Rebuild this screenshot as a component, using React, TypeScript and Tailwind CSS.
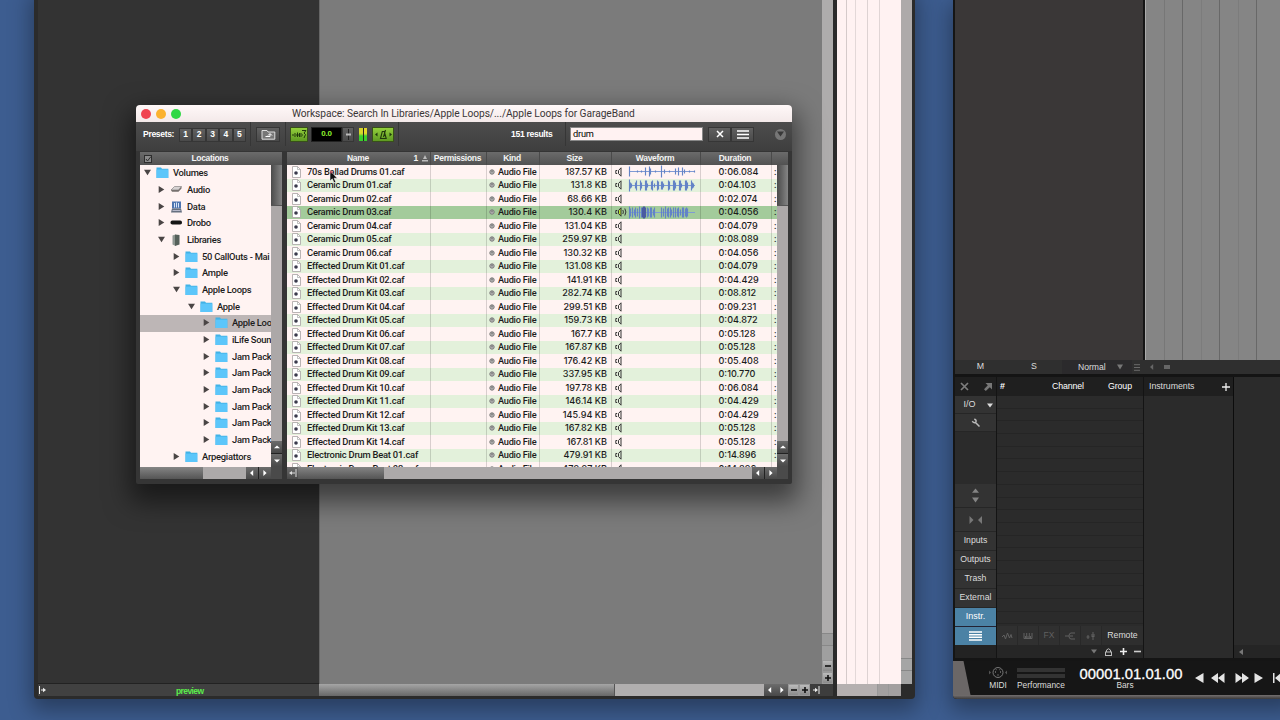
import React from "react";

const ui = "font-['Roboto','Liberation_Sans',sans-serif]";
const num = "font-['Inter','Liberation_Sans',sans-serif]";

const rows: [string, string, string][] = [
  ["70s Ballad Drums 01.caf", "187.57 KB", "0:06.084"],
  ["Ceramic Drum 01.caf", "131.8 KB", "0:04.103"],
  ["Ceramic Drum 02.caf", "68.66 KB", "0:02.074"],
  ["Ceramic Drum 03.caf", "130.4 KB", "0:04.056"],
  ["Ceramic Drum 04.caf", "131.04 KB", "0:04.079"],
  ["Ceramic Drum 05.caf", "259.97 KB", "0:08.089"],
  ["Ceramic Drum 06.caf", "130.32 KB", "0:04.056"],
  ["Effected Drum Kit 01.caf", "131.08 KB", "0:04.079"],
  ["Effected Drum Kit 02.caf", "141.91 KB", "0:04.429"],
  ["Effected Drum Kit 03.caf", "282.74 KB", "0:08.812"],
  ["Effected Drum Kit 04.caf", "299.51 KB", "0:09.231"],
  ["Effected Drum Kit 05.caf", "159.73 KB", "0:04.872"],
  ["Effected Drum Kit 06.caf", "167.7 KB", "0:05.128"],
  ["Effected Drum Kit 07.caf", "167.87 KB", "0:05.128"],
  ["Effected Drum Kit 08.caf", "176.42 KB", "0:05.408"],
  ["Effected Drum Kit 09.caf", "337.95 KB", "0:10.770"],
  ["Effected Drum Kit 10.caf", "197.78 KB", "0:06.084"],
  ["Effected Drum Kit 11.caf", "146.14 KB", "0:04.429"],
  ["Effected Drum Kit 12.caf", "145.94 KB", "0:04.429"],
  ["Effected Drum Kit 13.caf", "167.82 KB", "0:05.128"],
  ["Effected Drum Kit 14.caf", "167.81 KB", "0:05.128"],
  ["Electronic Drum Beat 01.caf", "479.91 KB", "0:14.896"],
  ["Electronic Drum Beat 02.caf", "479.97 KB", "0:14.896"],
];

type Kind = "folder" | "drive" | "data" | "drobo" | "lib";
const tree: { d: number; name: string; open?: boolean; kind: Kind; sel?: boolean }[] = [
  { d: 0, name: "Volumes", open: true, kind: "folder" },
  { d: 1, name: "Audio", kind: "drive" },
  { d: 1, name: "Data", kind: "data" },
  { d: 1, name: "Drobo", kind: "drobo" },
  { d: 1, name: "Libraries", open: true, kind: "lib" },
  { d: 2, name: "50 CallOuts - Mai", kind: "folder" },
  { d: 2, name: "Ample", kind: "folder" },
  { d: 2, name: "Apple Loops", open: true, kind: "folder" },
  { d: 3, name: "Apple", open: true, kind: "folder" },
  { d: 4, name: "Apple Loo", kind: "folder", sel: true },
  { d: 4, name: "iLife Soun", kind: "folder" },
  { d: 4, name: "Jam Pack", kind: "folder" },
  { d: 4, name: "Jam Pack", kind: "folder" },
  { d: 4, name: "Jam Pack", kind: "folder" },
  { d: 4, name: "Jam Pack", kind: "folder" },
  { d: 4, name: "Jam Pack", kind: "folder" },
  { d: 4, name: "Jam Pack", kind: "folder" },
  { d: 2, name: "Arpegiattors", kind: "folder" },
  { d: 2, name: "", kind: "folder" },
];

const indents = ["pl-[4px]", "pl-[18px]", "pl-[33px]", "pl-[48px]", "pl-[63px]"];

function Tri({ dir, className = "" }: { dir: "l" | "r" | "u" | "d"; className?: string }) {
  const p = { l: "M8 0V10L0 5Z", r: "M1 0V10L9 5Z", u: "M0 8H10L5 1Z", d: "M0 1H10L5 9Z" }[dir];
  return (
    <svg viewBox="0 0 10 10" preserveAspectRatio="none" className={"shrink-0 " + className} fill="currentColor">
      <path d={p} />
    </svg>
  );
}

function TreeIcon({ kind }: { kind: Kind }) {
  return (
    <svg width="13" height="12" viewBox="0 0 13 12" className="shrink-0">
      {kind === "folder" && (
        <>
          <path d="M0.5 0.5H5L6 1.8H12.3V11H0.5Z" fill="#41b2e6" />
          <path d="M0.5 2.6H12.3V11H0.5Z" fill="#5cc6fa" />
        </>
      )}
      {kind === "drive" && (
        <>
          <path d="M1 6L4.500 2.500H11.500L8.500 6Z" fill="#d6d2d2" stroke="#777" strokeWidth=".6" />
          <path d="M1 6H8.500L11.500 2.500V4.500L8.500 7.800H2Z" fill="#77716f" />
        </>
      )}
      {kind === "data" && (
        <>
          <rect x="2" y="0.5" width="9" height="7" fill="#4d74b0" />
          <path d="M4.5 2V6.500M6.5 1.5V6.500M8.5 2V6.500" stroke="#e8f0ff" strokeWidth=".9" />
          <path d="M2 7.5H11L12 11.5H1Z" fill="#667080" />
          <path d="M2.500 9.5H10.500" stroke="#ccd" strokeWidth=".8" />
        </>
      )}
      {kind === "drobo" && <rect x="0.5" y="3.6" width="11.5" height="4" rx="1.8" fill="#151515" />}
      {kind === "lib" && (
        <>
          <path d="M2.500 1.500L5.500 0.5V12L2.500 10.5Z" fill="#8d9691" />
          <path d="M5 0.5L9.500 1V10.500L5 12Z" fill="#55605a" />
        </>
      )}
    </svg>
  );
}

function Speaker({ active }: { active?: boolean }) {
  return (
    <svg width="13" height="10" viewBox="0 0 13 10" className="shrink-0" fill="none" stroke="#333" strokeWidth="1">
      <path d="M2.2 3.5H.8V6.5H2.2" />
      <path d="M3.500 3.500L6 .8V9.200L3.500 6.500Z" fill={active ? "#b8e62c" : "none"} />
      {active && <path d="M7.800 3Q9 5 7.800 7M9.800 1.500Q12 5 9.800 8.500" />}
    </svg>
  );
}

const waves: Record<number, [number, number][]> = {
  0: [[1, 5], [9, 1], [13, 1], [17, 4], [21, 5], [22, 3], [27, 1], [33, 6], [36, 2], [41, 1], [47, 3], [50, 4], [54, 4], [56, 2], [61, 1], [66, 1]],
  1: [[1, 6], [2, 3], [3, 2], [7, 3], [8, 5], [12, 5], [13, 3], [17, 5], [18, 5], [19, 2], [23, 4], [24, 5], [26, 2], [29, 5], [30, 4], [33, 4], [34, 4], [35, 2], [40, 5], [41, 4], [45, 5], [46, 5], [47, 3], [51, 5], [52, 5], [53, 2], [57, 5], [58, 5], [59, 3], [63, 5], [64, 3], [65, 2]],
  3: [[1, 6], [2, 4], [4, 5], [6, 3], [7, 5], [9, 4], [11, 6], [13, 5], [14, 5], [15, 6], [16, 6], [17, 5], [19, 5], [20, 4], [22, 5], [23, 5], [25, 3], [26, 5], [33, 5], [35, 4], [37, 6], [39, 4], [40, 5], [42, 5], [43, 3], [45, 5], [47, 5], [49, 4], [50, 5], [52, 3], [54, 5], [55, 5], [57, 4], [58, 5], [59, 4]],
};

function Wave({ i }: { i: number }) {
  return (
    <svg width="68" height="13" viewBox="0 0 68 13" className="shrink-0">
      <path d="M1 6.5H67" stroke="#7f9bd4" strokeWidth="1" />
      {waves[i].map(([x, h], k) => (
        <path key={k} d={`M${x + 0.5} ${6.5 - h}V${6.5 + h}`} stroke={i === 3 && x > 13 && x < 18 ? "#4a5ca0" : "#6384c6"} strokeWidth="1.15" />
      ))}
    </svg>
  );
}

const sbBtn = "flex shrink-0 items-center justify-center border-[#222] bg-linear-to-b from-[#6c6c6c] to-[#484848] text-white";

function VScroll() {
  return (
    <div className="flex w-[11px] shrink-0 flex-col">
      <div className="h-10 bg-linear-to-r from-[#4b4b4b] to-[#858585]" />
      <div className="flex-1 border-t border-[#555] bg-[#aca8a8]" />
      <div className={sbBtn + " h-[13px] border-b"}><Tri dir="u" className="h-1 w-1.5" /></div>
      <div className={sbBtn + " h-[13px]"}><Tri dir="d" className="h-1 w-1.5" /></div>
    </div>
  );
}

function HButtons() {
  return (
    <>
      <div className={sbBtn + " w-[13px] border-r"}><Tri dir="l" className="h-1.5 w-1" /></div>
      <div className={sbBtn + " w-3"}><Tri dir="r" className="h-1.5 w-1" /></div>
      <div className="w-[11px] shrink-0 bg-[#4a4a4a]" />
    </>
  );
}

const tbBtn = "flex items-center justify-center border border-[#363636] bg-linear-to-b from-[#606060] to-[#4a4a4a] text-white";

function Toolbar() {
  return (
    <div className="flex h-[29px] shrink-0 items-center bg-linear-to-b from-[#4d4d4d] to-[#3e3e3e] pb-[5px] pl-[7px] font-['Liberation_Sans',sans-serif] text-[9px] font-bold text-white">
      <span className="w-[36px] pt-px text-[8.6px] tracking-[-0.35px]">Presets:</span>
      <div className="flex h-[15px] w-[67px] pt-px text-[8.5px]">
        {[1, 2, 3, 4, 5].map((n) => (
          <div key={n} className={tbBtn + " flex-1"}>{n}</div>
        ))}
      </div>
      <div className="ml-1 mr-[5px] h-6 w-px bg-[#363636]" />
      <div className={tbBtn + " h-[15px] w-[24px]"}>
        <svg width="15" height="11" viewBox="0 0 15 11" fill="#777" stroke="#ddd" strokeWidth="1" className="shrink-0">
          <path d="M1 10.2V1.5H6L7 3H13.8V10.2Z" />
          <path d="M4.500 7.500H9V5M7 6.500L9 4.500L11 6.500" fill="none" stroke="#fff" />
        </svg>
      </div>
      <div className="ml-[5px] mr-1 h-6 w-px bg-[#363636]" />
      <div className="flex h-[15px] w-[18px] items-center justify-center border border-[#38501a] bg-linear-to-b from-[#93cf3c] to-[#5f9b22]">
        <svg width="15" height="11" viewBox="0 0 15 11" fill="none" stroke="#20380c" strokeWidth="1" className="shrink-0">
          <path d="M0 6H3M2.500 4L4.500 6L2.500 8M5.500 8V3.500M7.500 8V4M6 6H9M8.500 4L10.500 6L8.500 8M10 1.500H14L12 4L13.500 5.500L12 9" />
        </svg>
      </div>
      <div className="ml-[3px] flex h-[15px] w-[31px] items-center justify-center border border-[#222] bg-black text-[8px] tracking-[-0.2px] text-[#8ff02e]">0.0</div>
      <div className={tbBtn + " h-[15px] w-[12px]"}>
        <svg width="5" height="11" viewBox="0 0 5 11" fill="none" stroke="#bbb" className="shrink-0"><path d="M2.5 0V11" stroke="#222" /><path d="M0 5.5H5" strokeWidth="2" /></svg>
      </div>
      <div className="ml-[5px] flex h-[13px] w-2 gap-px bg-[#222]">
        <div className="flex-1 bg-linear-to-b from-[#d7d52b] from-40% to-[#39cf2c] to-60%" />
        <div className="flex-1 bg-linear-to-b from-[#e5d92b] from-40% to-[#39cf2c] to-60%" />
      </div>
      <div className="ml-[5px] flex h-[15px] w-[22px] items-center justify-center border border-[#38501a] bg-linear-to-b from-[#93cf3c] to-[#5f9b22]">
        <svg width="19" height="11" viewBox="0 0 19 11" fill="#20380c" stroke="#20380c" className="shrink-0">
          <path d="M3.5 3.5V7.5L1 5.5ZM15.5 3.5V7.5L18 5.5Z" stroke="none" />
          <path d="M6.5 9.5L8.3 2.5H10.3L12.2 9.5ZM9.5 8L11.5 1" fill="none" strokeWidth="1.1" />
        </svg>
      </div>
      <div className="ml-1 h-6 w-px bg-[#363636]" />
      <span className="ml-[112px] w-[50px] whitespace-nowrap pt-px text-[8.6px] tracking-[-0.32px]">151 results</span>
      <div className="ml-1 mr-[4px] h-6 w-px bg-[#363636]" />
      <div className={"flex h-3.5 w-[133px] items-center border border-[#888] bg-[#fff2f2] pl-[2px] text-[9.2px] font-normal tracking-[-0.2px] text-black " + ui}>drum</div>
      <div className={tbBtn + " ml-[5px] h-[15px] w-[23px]"}>
        <svg width="8" height="8" viewBox="0 0 8 8" stroke="#fff" strokeWidth="1.5"><path d="M1 1L7 7M7 1L1 7" /></svg>
      </div>
      <div className={tbBtn + " h-[15px] w-[23px]"}>
        <svg width="12" height="9" viewBox="0 0 12 9" stroke="#fff" strokeWidth="1.4"><path d="M0 1H12M0 4.5H12M0 8H12" /></svg>
      </div>
      <div className="ml-[21px] flex h-[11px] w-[11px] items-center justify-center rounded-full bg-[#767676] text-[#383838]"><Tri dir="d" className="h-1.5 w-[7px]" /></div>
    </div>
  );
}

function FileTable() {
  const hd = "flex shrink-0 items-center justify-center border-r border-[#4a4a4a]";
  const ln = "h-full shrink-0 border-r border-black/15 flex items-center";
  return (
    <div className="flex w-[501px] shrink-0 flex-col">
      <div className="flex h-[13px] shrink-0 bg-linear-to-b from-[#6b6b6b] to-[#525252] font-['Liberation_Sans',sans-serif] text-[8.5px] font-bold tracking-[-0.3px] text-[#f4f4f4]">
        <div className={hd + " w-[144px] pl-[60px]"}>
          <span className="flex-1">Name</span>
          <span className="mr-1">1</span>
          <svg width="6" height="7" viewBox="0 0 6 7" className="mr-0.5" fill="#bbb"><path d="M3 0L5 4H1ZM0 5H6V6.5H0Z" /></svg>
        </div>
        <div className={hd + " w-[56px] pr-0.5"}>Permissions</div>
        <div className={hd + " w-[53px] pr-0.5"}>Kind</div>
        <div className={hd + " w-[72px] pr-0.5"}>Size</div>
        <div className={hd + " w-[89px] pr-0.5"}>Waveform</div>
        <div className={hd + " w-[71px] pr-0.5"}>Duration</div>
      </div>
      <div className="flex h-[302px] shrink-0">
        <div className={"w-[490px] overflow-hidden bg-[#fff3f2] text-[9.4px] font-medium text-[#1c1c1c] " + ui}>
          {rows.map((r, i) => (
            <div key={i} className={"flex h-[13.5px] items-center whitespace-nowrap " + (i === 3 ? "bg-[#a3cb9b]" : i % 2 ? "bg-[#e3f1db]" : "bg-[#fff3f2]")}>
              <div className={ln + " w-[144px] pl-[5px]"}>
                <svg width="9" height="12" viewBox="0 0 9 12" className="mr-[6px] shrink-0">
                  <path d="M.5 .5H5.5L8.5 3.5V11.5H.5Z" fill="#fff" stroke="#a8a2a2" strokeWidth=".8" />
                  <path d="M5.5 .5V3.5H8.5" fill="none" stroke="#999" strokeWidth=".6" />
                  <circle cx="4" cy="7" r="1.8" fill="#3a3a4c" />
                </svg>
                <span className="tracking-[-0.23px]">{r[0]}</span>
              </div>
              <div className={ln + " w-[56px]"} />
              <div className={ln + " w-[53px] pl-[2px]"}>
                <svg width="6" height="6" viewBox="0 0 6 6" className="mr-[3px] shrink-0"><circle cx="3" cy="3" r="2.2" fill="#bbb" stroke="#777" /><path d="M3 1.6V3.4" stroke="#444" strokeWidth=".8" /></svg>
                <span className="w-[39px] shrink-0 text-[9.2px] tracking-[-0.25px]">Audio File</span>
              </div>
              <div className={ln + " w-[72px] justify-end pr-[4px] text-[9.1px] " + num}>{r[1]}</div>
              <div className={ln + " w-[89px] pl-[3px]"}>
                <Speaker active={i === 3} />
                {waves[i] && <Wave i={i} />}
              </div>
              <div className={ln + " w-[71px] pl-[17.5px] text-[9.1px] " + num}>{r[2]}</div>
              <span className="pl-[2px]">:</span>
            </div>
          ))}
        </div>
        <VScroll />
      </div>
      <div className="flex h-3 shrink-0">
        <div className={sbBtn + " w-[11px]"}>
          <svg width="8" height="8" viewBox="0 0 8 8" stroke="#ddd" fill="#ddd"><path d="M7 0V8M2 4H6" /><path d="M0 4L3 2V6Z" stroke="none" /></svg>
        </div>
        <div className="w-[86px] bg-linear-to-b from-[#858585] to-[#555]" />
        <div className="flex-1 bg-[#aca9a9]" />
        <HButtons />
      </div>
    </div>
  );
}

function Locations() {
  return (
    <div className="flex w-[142px] shrink-0 flex-col">
      <div className="flex h-[13px] shrink-0 items-center bg-linear-to-b from-[#6b6b6b] to-[#525252] pl-1 font-['Liberation_Sans',sans-serif] text-[8.5px] font-bold tracking-[-0.35px] text-[#f4f4f4]">
        <svg width="8" height="8" viewBox="0 0 8 8" fill="none" stroke="#2d2d2d"><rect x=".5" y=".5" width="7" height="7" fill="#8a8a8a" /><path d="M2 4L3.5 6L7 1.5" /></svg>
        <span className="w-[116px] text-center">Locations</span>
      </div>
      <div className="flex h-[302px] shrink-0">
        <div className={"w-[131px] overflow-hidden bg-[#fff3f2] text-[9.4px] font-medium text-[#1c1c1c] " + ui}>
          {tree.map((t, i) => (
            <div key={i} className={"flex h-[16.68px] items-center whitespace-nowrap " + indents[t.d] + (t.sel ? " bg-[#bdb6b6]" : "")}>
              <div className="flex w-3 shrink-0 pb-px text-[#4a4545]">
                <Tri dir={t.open ? "d" : "r"} className="h-[7px] w-[7px]" />
              </div>
              <TreeIcon kind={t.kind} />
              <span className="pl-1 tracking-[-0.27px]">{t.name}</span>
            </div>
          ))}
        </div>
        <VScroll />
      </div>
      <div className="flex h-3 shrink-0">
        <div className="w-[63px] bg-linear-to-b from-[#858585] to-[#555]" />
        <div className="flex-1 bg-[#aca9a9]" />
        <HButtons />
      </div>
    </div>
  );
}

function Workspace() {
  return (
    <div className="absolute left-[136px] top-[105px] flex h-[379px] w-[656px] flex-col overflow-hidden rounded-t-[4px] rounded-b-[2px] bg-[#353535] shadow-[0_12px_26px_6px_rgba(0,0,0,0.5)]">
      <div className="flex h-[17px] shrink-0 items-center bg-linear-to-b from-[#fff8f8] to-[#f3e9e9] pl-[5px] pt-px">
        <div className="flex gap-[5px]">
          <div className="h-2.5 w-2.5 rounded-full bg-[#f04450]" />
          <div className="h-2.5 w-2.5 rounded-full bg-[#fbb22f]" />
          <div className="h-2.5 w-2.5 rounded-full bg-[#2fd845]" />
        </div>
        <span className={"ml-[111px] whitespace-nowrap text-[10.2px] tracking-[-0.055px] text-[#3a3636] " + ui}>
          Workspace: Search In Libraries/Apple Loops/.../Apple Loops for GarageBand
        </span>
      </div>
      <Toolbar />
      <div className="mt-px flex flex-1 gap-[5px] px-1">
        <Locations />
        <FileTable />
      </div>
    </div>
  );
}

function BackWindow() {
  const knob = "flex shrink-0 items-center justify-center bg-linear-to-b from-[#bbb] to-[#8a8a8a] text-[#111] border border-[#999]";
  const minus = <svg width="6" height="6" viewBox="0 0 6 6" stroke="#111" strokeWidth="1.6"><path d="M0 3H6" /></svg>;
  const plus = <svg width="6" height="6" viewBox="0 0 6 6" stroke="#111" strokeWidth="1.6"><path d="M0 3H6M3 0V6" /></svg>;
  return (
    <div className="absolute left-[34px] top-[-10px] flex h-[709px] w-[881px] rounded-b-[4px] bg-[#2b2b2b] pb-[3px] pl-1 pr-[3px] shadow-[0_8px_22px_3px_rgba(0,0,0,0.35)]">
      <div className="flex w-[281px] shrink-0 flex-col">
        <div className="flex-1 bg-[#333]" />
        <div className="flex h-[13px] items-center border-t border-[#222] bg-[#414141]">
          <svg width="9" height="8" viewBox="0 0 9 8" stroke="#eee" fill="#eee"><path d="M1.5 0V8M3 4H6" /><path d="M8 4L5 1.8V6.2Z" stroke="none" /></svg>
          <span className="ml-[129px] pt-0.5 font-['Liberation_Sans',sans-serif] text-[8.5px] font-bold leading-[10px] tracking-[-0.6px] text-[#5cec4c]">preview</span>
        </div>
      </div>
      <div className="flex w-[514px] shrink-0 flex-col">
        <div className="flex flex-1">
          <div className="flex-1 border-l border-[#666] bg-[#7b7b7b]" />
          <div className="flex w-[11px] flex-col bg-[#aeacac]">
            <div className="flex-1" />
            <div className="h-[13px] border-y border-[#888] bg-[#9c9c9c]" />
            <div className="h-[14px] bg-[#9f9f9f]" />
            <div className={knob + " h-3"}>{minus}</div>
            <div className={knob + " h-3"}>{plus}</div>
          </div>
        </div>
        <div className="flex h-3 bg-[#3d3d3d]">
          <div className="w-[296px] border-r border-[#555] bg-linear-to-b from-[#a5a5a5] to-[#686868]" />
          <div className="w-[149px] bg-[#b1afaf]" />
          <div className={sbBtn + " w-3"}><Tri dir="l" className="h-1.5 w-1" /></div>
          <div className={sbBtn + " w-3"}><Tri dir="r" className="h-1.5 w-1" /></div>
          <div className={knob + " w-[11px]"}>{minus}</div>
          <div className={knob + " w-[11px]"}>{plus}</div>
          <div className="flex w-3 items-center justify-center">
            <svg width="8" height="8" viewBox="0 0 8 8" stroke="#eee" fill="#eee"><path d="M7 0V8M1 4H4" /><path d="M6 4L3 1.8V6.2Z" stroke="none" /></svg>
          </div>
        </div>
      </div>
      <div className="ml-1 flex w-[75px] shrink-0 flex-col">
        <div className="flex flex-1">
          <div className="flex w-16 bg-[#fff2f2]">
            <div className="w-[10px] border-r border-[#d5caca]" />
            <div className="w-[9px] border-r border-[#e3d8d8]" />
            <div className="w-3 border-r border-[#ddd2d2]" />
            <div className="w-3 border-r border-[#e0d5d5]" />
          </div>
          <div className="flex w-[11px] flex-col bg-[#aeaaaa]">
            <div className="flex-1" />
            <div className="h-[13px] border-y border-[#888] bg-[#a5a5a5]" />
            <div className="h-[13px] bg-[#a5a5a5]" />
          </div>
        </div>
        <div className="flex h-3 w-16 bg-[#b5b0b0]">
          <div className="w-10" />
          <div className="w-3 border-x border-[#999] bg-[#a3a0a0]" />
          <div className="w-3 bg-[#a3a0a0]" />
        </div>
      </div>
    </div>
  );
}

function Studio() {
  const btn = "flex shrink-0 items-center justify-center border-b border-[#262626] bg-[#333]";
  return (
    <div className="absolute left-[953px] top-0 flex h-[699px] w-[340px] flex-col rounded-bl-[4px] bg-[#151515] font-['Liberation_Sans',sans-serif] text-[9px] text-[#dcdcdc] shadow-[0_8px_22px_3px_rgba(0,0,0,0.35)]">
      <div className="flex h-[360px] shrink-0 pl-0.5">
        <div className="w-[188px] bg-[#3a3737]" />
        <div className="w-0.5 bg-[#151515]" />
        <div className="flex flex-1 border-l border-[#aaa] bg-[#858585]">
          <div className="w-[19px] border-r border-[#777]" />
          <div className="w-[18px] border-r border-[#686868]" />
          <div className="w-[19px] border-r border-[#7c7c7c]" />
          <div className="w-[18px] border-r border-[#686868]" />
          <div className="w-[19px] border-r border-[#7c7c7c]" />
          <div className="w-[18px] border-r border-[#686868]" />
        </div>
      </div>
      <div className="ml-0.5 flex h-[14px] shrink-0 items-center bg-[#2f2f2f] text-[8.8px]">
        <span className="w-[51px] text-center">M</span>
        <span className="w-[56px] text-center">S</span>
        <div className="flex h-full w-[70px] items-center bg-[#2b2a2c] pl-4 pt-px text-[8.6px]">Normal</div>
        <Tri dir="d" className="-ml-[15px] h-1.5 w-1.5 text-[#777]" />
        <svg width="8" height="7" viewBox="0 0 8 7" className="ml-2.5" stroke="#6a6a6a"><path d="M1 .7H7M1 3.5H7M1 6.3H7" /></svg>
        <Tri dir="l" className="ml-[9px] h-1.5 w-1 text-[#666]" />
        <div className="ml-2.5 h-1 w-1.5 bg-[#666]" />
      </div>
      <div className="h-[3px] shrink-0 bg-[#141414]" />
      <div className="flex h-[281px] shrink-0 pl-0.5">
        <div className="flex w-[41px] shrink-0 flex-col bg-[#2b2b2b]">
          <div className="flex h-[19px] shrink-0 items-center bg-[#1f1f1f] pl-[5px]">
            <svg width="9" height="9" viewBox="0 0 9 9" stroke="#7d7d7d" strokeWidth="1.7"><path d="M1 1L8 8M8 1L1 8" /></svg>
            <svg width="8" height="8" viewBox="0 0 8 8" className="ml-[15px]" fill="#777"><path d="M1.5 0H8V6.5L5.8 4.3L1.8 8L0 6.2L3.8 2.3Z" /></svg>
          </div>
          <div className={btn + " h-[18px] pt-px pr-1"}><span className="w-[19px] text-center">I/O</span><Tri dir="d" className="ml-2 -mr-1.5 h-[5px] w-1.5" /></div>
          <div className={btn + " h-[18px]"}>
            <svg width="9" height="9" viewBox="0 0 9 9" fill="none" stroke="#bbb" strokeWidth="1.5"><path d="M4.5 4.5L8.5 8.5M1.2 3.2Q4 6 5 3.5Q5.5 1.5 3.2 1.2" /></svg>
          </div>
          <div className="flex-1" />
          <div className={btn + " h-6 flex-col gap-[3px] text-[#858585]"}><Tri dir="u" className="h-[6px] w-[7px]" /><Tri dir="d" className="h-[6px] w-[7px]" /></div>
          <div className={btn + " h-6 gap-1 text-[#777]"}><Tri dir="r" className="h-2 w-[5px]" /><Tri dir="l" className="h-2 w-[5px]" /></div>
          <div className={btn + " h-[19px] text-[8.7px]"}>Inputs</div>
          <div className={btn + " h-[19px] text-[8.7px]"}>Outputs</div>
          <div className={btn + " h-[19px] text-[8.7px]"}>Trash</div>
          <div className={btn + " h-[19px] text-[8.7px]"}>External</div>
          <div className="flex h-[19px] shrink-0 items-center justify-center border-b border-[#223] bg-[#4b82a5] text-white">Instr.</div>
          <div className="flex h-[18px] shrink-0 items-center justify-center bg-[#4b82a5]">
            <svg width="13" height="10" viewBox="0 0 13 10" stroke="#fff" strokeWidth="1.4"><path d="M0 1H13M0 3.7H13M0 6.3H13M0 9H13" /></svg>
          </div>
          <div className="h-[13px] shrink-0 bg-[#232323]" />
        </div>
        <div className="w-px bg-[#141414]" />
        <div className="flex w-[146px] shrink-0 flex-col bg-[#2b2b2b]">
          <div className="flex h-[19px] shrink-0 items-center bg-[#1f1f1f] pt-px text-[8.8px] text-white">
            <span className="w-[55px] pl-[3px] font-bold">#</span><span className="w-14 tracking-[-0.15px]">Channel</span><span className="tracking-[-0.1px]">Group</span>
          </div>
          <div className="flex h-[230px] flex-col overflow-hidden">
            {Array.from({ length: 18 }, (_, i) => (
              <div key={i} className="h-[12.7px] shrink-0 border-b border-[#252525]" />
            ))}
          </div>
          <div className="flex h-[19px] shrink-0 items-center gap-px bg-[#282828]">
            {["M1 6L3 4L4.500 8L6.500 2L8.500 7L10 3.500L11 7", "M2 2V7.500H10V2M4.7 2V7M7.3 2V7M3.500 7V5M6 7V5M8.500 7V5", "", "M1 5H5M11 2H7Q5 2 5 5Q5 8 7 8H11M6 5H9", "M3 8V4M1.5 6H4.5M8 1V9M6 4H10M6.5 5.5H9.5"].map((d, i) => (
              <div key={i} className="flex h-full w-5 items-center justify-center bg-[#303030] text-[8.5px] text-[#606060]">
                {d ? <svg width="12" height="10" viewBox="0 0 12 10" fill="none" stroke="#606060" strokeWidth="1"><path d={d} /></svg> : "FX"}
              </div>
            ))}
            <div className="flex h-full flex-1 items-center justify-center bg-[#2e2e2e] pt-px text-[8.7px]">Remote</div>
          </div>
          <div className="flex h-[13px] items-center bg-[#262626]">
            <Tri dir="d" className="ml-[94px] h-[5px] w-1.5 text-[#777]" />
            <svg width="7" height="8" viewBox="0 0 7 8" className="ml-[8px]" fill="none" stroke="#bbb"><path d="M1.5 4V2Q3.5 -.5 5.5 2V4" /><rect x=".5" y="4" width="6" height="3.5" /></svg>
            <svg width="7" height="7" viewBox="0 0 7 7" className="ml-[8px]" stroke="#eee" strokeWidth="1.6"><path d="M0 3.5H7M3.5 0V7" /></svg>
            <svg width="7" height="7" viewBox="0 0 7 7" className="ml-[7px]" stroke="#ccc" strokeWidth="1.6"><path d="M0 3.5H7" /></svg>
          </div>
        </div>
        <div className="w-px bg-[#141414]" />
        <div className="flex w-[89px] shrink-0 flex-col bg-[#2b2b2b]">
          <div className="flex h-[19px] shrink-0 items-center bg-[#1f1f1f] pl-[5px] pt-px text-[8.8px]">
            <span className="w-[73px] tracking-[-0.05px]">Instruments</span>
            <svg width="8" height="8" viewBox="0 0 8 8" stroke="#eee" strokeWidth="1.3"><path d="M0 4H8M4 0V8" /></svg>
          </div>
        </div>
        <div className="w-px bg-[#0c0c0c]" />
        <div className="flex flex-1 flex-col bg-[#2b2b2b]">
          <div className="flex-1" />
          <div className="flex h-[13px] items-center bg-[#252525] pl-[5px]"><Tri dir="l" className="h-1.5 w-[5px] text-[#777]" /></div>
        </div>
      </div>
      <div className="mt-[3px] flex h-[34px] shrink-0 items-start bg-[#161616]">
        <svg width="18" height="34" viewBox="0 0 18 34" className="shrink-0"><path d="M0 0H10.5L17.5 34H0Z" fill="#6b6767" /></svg>
        <div className="flex w-[54px] flex-col items-center pt-[5px]">
          <svg width="22" height="13" viewBox="0 0 22 13" fill="none" stroke="#777">
            <circle cx="11" cy="6.5" r="5" />
            <path d="M2 4.5L4 6.5L2 8.5ZM20 4.5L18 6.5L20 8.5Z" fill="#555" stroke="none" />
            <path d="M8 6H9M13 6H14M10.5 9H11.5M8.8 3.6H9.5M12.5 3.6H13.2" strokeWidth="1.4" />
          </svg>
          <span className="text-[8.4px] leading-3">MIDI</span>
        </div>
        <div className="-ml-[8px] flex w-[48px] flex-col items-center pt-[7px]">
          <div className="h-1 w-full bg-[#333]" />
          <div className="mt-[2px] h-1 w-full bg-[#333]" />
          <span className="mt-px whitespace-nowrap text-[8.4px] leading-3">Performance</span>
        </div>
        <div className="ml-[13px] flex w-[106px] flex-col items-center pt-[5px]">
          <span className="text-[14.8px] leading-[17px] text-white [-webkit-text-stroke:0.3px_#fff]">00001.01.01.00</span>
          <span className="-mt-[4px] pr-3 text-[8.4px] leading-3">Bars</span>
        </div>
        <svg width="86" height="12" viewBox="0 0 86 12" className="ml-[11px] mt-[11px]" fill="#e4e4e4">
          <path d="M8.5 1V11L0 6ZM23 1V11L16 6ZM29.500 1V11L23 6ZM40.500 1V11L47.500 6ZM47 1V11L54 6ZM59.500 1V11L68 6ZM78 1H79.500V11H78ZM86 1V11L80 6Z" />
        </svg>
      </div>
      <div className="flex-1 rounded-bl-[4px] bg-linear-to-b from-[#747070] to-[#3d3b3b]" />
    </div>
  );
}

export default function App() {
  return (
    <div className="relative h-[720px] w-[1280px] overflow-hidden bg-[#3d5d90]">
      <BackWindow />
      <Studio />
      <Workspace />
      <svg width="9" height="14" viewBox="0 0 9 14" className="absolute left-[329px] top-[170px]">
        <path d="M1 .5V11L3.300 8.800L5 12.800L6.800 12L5.100 8.200H8.300Z" fill="#111" stroke="#eee" strokeWidth=".6" />
        <circle cx="2.200" cy="2" r="1.500" fill="#d0455a" opacity=".7" />
      </svg>
    </div>
  );
}
